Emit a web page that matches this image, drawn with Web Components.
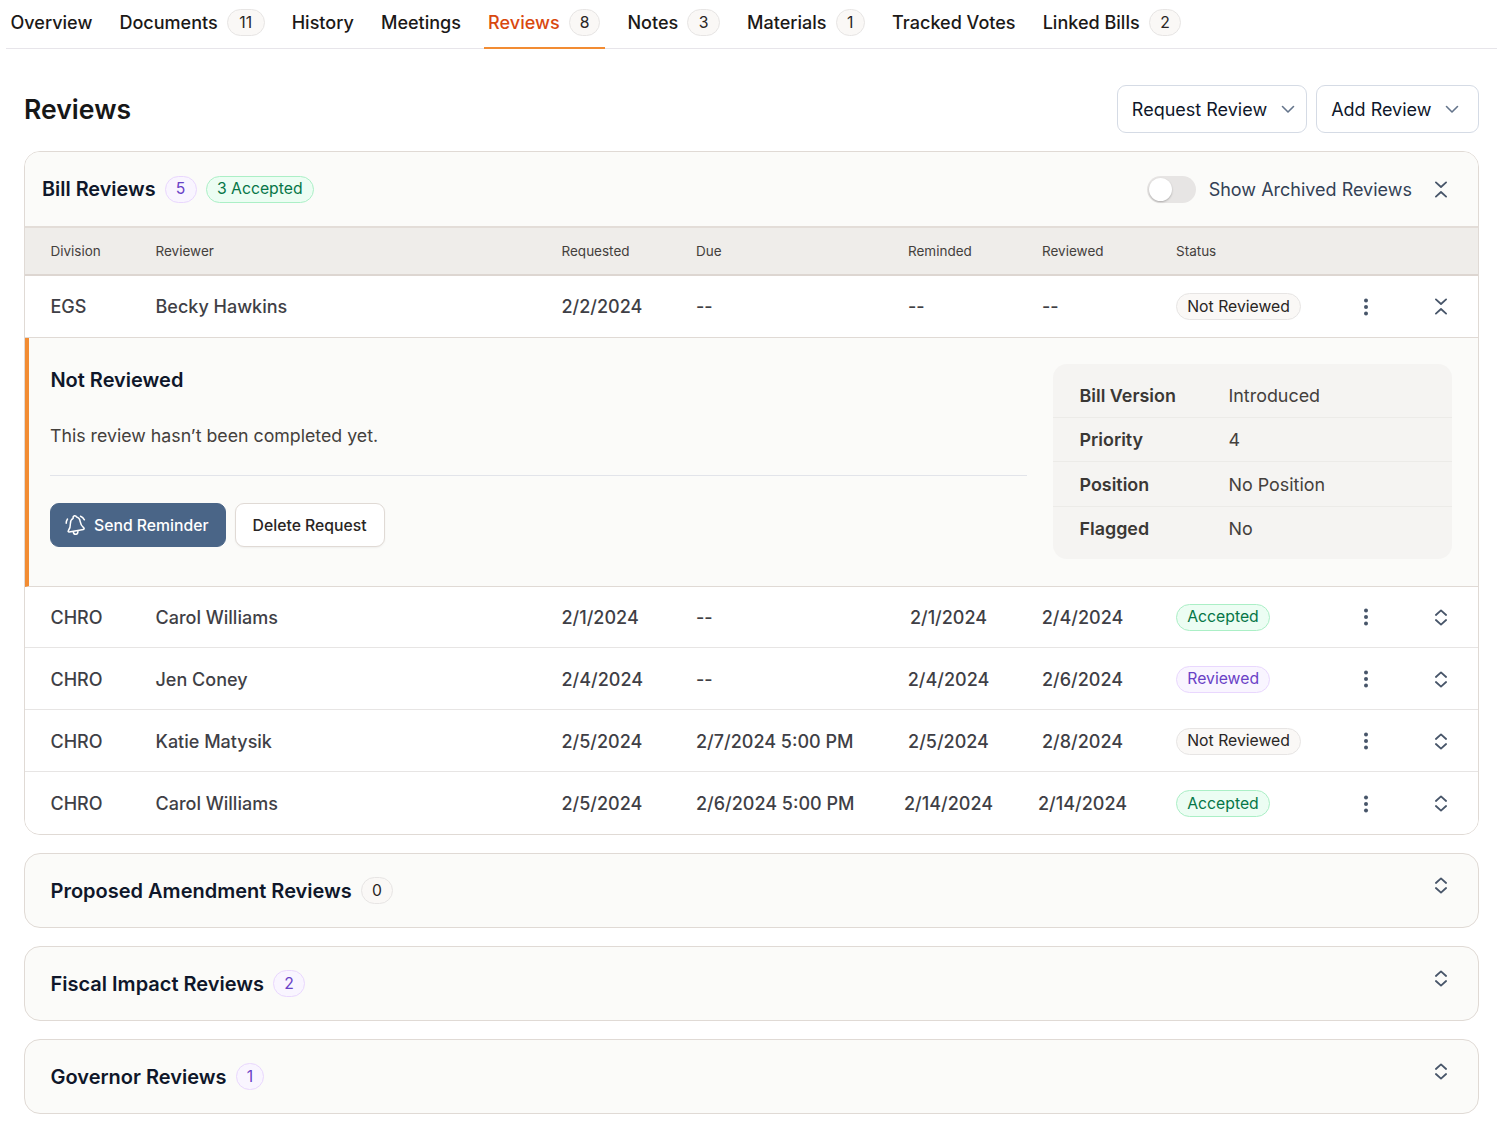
<!DOCTYPE html>
<html lang="en">
<head>
<meta charset="utf-8">
<title>Reviews</title>
<style>
  html, body { margin: 0; background: #fff; }
  body { font-family: Inter, "Liberation Sans", sans-serif; color: #1c1917; }
</style>
</head>
<body>
<app-tabs>
  <tab-item>Overview</tab-item>
  <tab-item count="11" wide>Documents</tab-item>
  <tab-item>History</tab-item>
  <tab-item>Meetings</tab-item>
  <tab-item count="8" active narrow>Reviews</tab-item>
  <tab-item count="3">Notes</tab-item>
  <tab-item count="1">Materials</tab-item>
  <tab-item>Tracked Votes</tab-item>
  <tab-item count="2">Linked Bills</tab-item>
</app-tabs>

<reviews-page>
  <page-title>
    Reviews
    <menu-button slot="actions">Request Review</menu-button>
    <menu-button slot="actions" wide>Add Review</menu-button>
  </page-title>

  <review-card>
    <card-head>
      Bill Reviews
      <count-pill slot="badges" tone="purple">5</count-pill>
      <count-pill slot="badges" tone="green">3 Accepted</count-pill>
      <archive-toggle slot="tools">Show Archived Reviews</archive-toggle>
      <chevron-icon slot="tools" mode="collapse"></chevron-icon>
    </card-head>
    <review-head></review-head>
    <review-row division="EGS" reviewer="Becky Hawkins" requested="2/2/2024" due="--" reminded="--" reviewed="--" status="Not Reviewed" tone="gray" open></review-row>
    <review-detail>
      <detail-fact label="Bill Version">Introduced</detail-fact>
      <detail-fact label="Priority">4</detail-fact>
      <detail-fact label="Position">No Position</detail-fact>
      <detail-fact label="Flagged" last>No</detail-fact>
    </review-detail>
    <review-row division="CHRO" reviewer="Carol Williams" requested="2/1/2024" due="--" reminded="2/1/2024" reviewed="2/4/2024" status="Accepted" tone="green" short></review-row>
    <review-row division="CHRO" reviewer="Jen Coney" requested="2/4/2024" due="--" reminded="2/4/2024" reviewed="2/6/2024" status="Reviewed" tone="purple"></review-row>
    <review-row division="CHRO" reviewer="Katie Matysik" requested="2/5/2024" due="2/7/2024 5:00 PM" reminded="2/5/2024" reviewed="2/8/2024" status="Not Reviewed" tone="gray"></review-row>
    <review-row division="CHRO" reviewer="Carol Williams" requested="2/5/2024" due="2/6/2024 5:00 PM" reminded="2/14/2024" reviewed="2/14/2024" status="Accepted" tone="green" last></review-row>
  </review-card>

  <collapsed-card count="0" tone="gray">Proposed Amendment Reviews</collapsed-card>
  <collapsed-card count="2" tone="purple">Fiscal Impact Reviews</collapsed-card>
  <collapsed-card count="1" tone="purple">Governor Reviews</collapsed-card>
</reviews-page>

<script>
// Small helper: every element gets an open shadow root from a string
function shadow(el, html) {
  el.attachShadow({ mode: 'open' }).innerHTML = html;
}

class AppTabs extends HTMLElement {
  constructor() {
    super();
    shadow(this, `
      <style>
        :host { display: flex; gap: 18.1px; height: 49px; margin: 0 3px 0 6px; border-bottom: 1px solid #e7e5ea; box-sizing: border-box; }
      </style>
      <slot></slot>`);
  }
}

class CountPill extends HTMLElement {
  constructor() {
    super();
    shadow(this, `
      <style>
        :host { display: inline-flex; align-items: center; justify-content: center; height: 27px; box-sizing: border-box; padding: 0 10.25px; border-radius: 14px; border: 1px solid #e7e5e4; background: #faf8f6; color: #292524; font-size: 15.75px; font-weight: 400; line-height: 1; white-space: nowrap; }
        :host([tone="purple"]) { background: #f9f5ff; border-color: #e9d7fe; color: #6941c6; }
        :host([tone="green"]) { background: #ecfdf3; border-color: #abefc6; color: #067647; }
      </style>
      <slot></slot>`);
  }
}

class TabItem extends HTMLElement {
  constructor() {
    super();
    const count = this.getAttribute('count');
    const pad = this.hasAttribute('wide') ? 11.5 : this.hasAttribute('narrow') ? 10 : 10.5;
    shadow(this, `
      <style>
        :host { display: flex; align-items: center; gap: 9px; height: 49px; box-sizing: border-box; padding: 0 4.5px 2px; font-size: 18.05px; font-weight: 500; color: #1c1917; border-bottom: 2px solid transparent; }
        :host([active]) { color: #d9480f; border-bottom-color: #f28c33; }
        count-pill { padding: 0 ${pad}px; }
      </style>
      <slot></slot>
      ${count ? `<count-pill>${count}</count-pill>` : ''}`);
  }
}

class ReviewsPage extends HTMLElement {
  constructor() {
    super();
    shadow(this, `
      <style>
        :host { display: flex; flex-direction: column; gap: 18px; padding: 35px 21px 33px 24px; }
      </style>
      <slot></slot>`);
  }
}

class PageTitle extends HTMLElement {
  constructor() {
    super();
    shadow(this, `
      <style>
        :host { display: flex; align-items: center; justify-content: space-between; height: 49px; }
        h1 { margin: 0; font-size: 26.6px; font-weight: 600; color: #171717; }
        .actions { display: flex; gap: 9px; padding-top: 1px; }
      </style>
      <h1><slot></slot></h1>
      <div class="actions"><slot name="actions"></slot></div>`);
  }
}

class MenuButton extends HTMLElement {
  constructor() {
    super();
    shadow(this, `
      <style>
        :host { display: flex; align-items: center; gap: 13px; height: 48px; box-sizing: border-box; padding: 0 10px 0 14px; background: #fff; border: 1px solid #d5dbe5; border-radius: 9px; color: #0f172a; font-size: 18px; font-weight: 400; }
        :host([wide]) { gap: 12px; padding-right: 18.5px; }
        svg { width: 16px; height: 16px; fill: none; stroke: #64748b; stroke-width: 1.6; stroke-linecap: round; stroke-linejoin: round; }
      </style>
      <slot></slot>
      <svg viewBox="0 0 16 16"><path d="M2.5 5.5 8 11l5.5-5.5"/></svg>`);
  }
}

class ChevronIcon extends HTMLElement {
  constructor() {
    super();
    // collapse = chevrons pointing at each other, expand = pointing away
    const d = this.getAttribute('mode') === 'collapse'
      ? 'M1.9 2.4 7 7 12.1 2.4M1.9 16.6 7 12 12.1 16.6'
      : 'M1.9 7 7 2.4 12.1 7M1.9 12 7 16.600 12.1 12';
    shadow(this, `
      <style>
        :host { display: block; width: 14px; height: 19px; line-height: 0; }
        svg { width: 14px; height: 19px; fill: none; stroke: #475569; stroke-width: 1.8; stroke-linecap: round; stroke-linejoin: round; }
      </style>
      <svg viewBox="0 0 14 19"><path d="${d}"/></svg>`);
  }
}

class KebabIcon extends HTMLElement {
  constructor() {
    super();
    shadow(this, `
      <style>
        :host { display: block; width: 6px; height: 18px; line-height: 0; }
        svg { width: 6px; height: 18px; fill: #475569; }
      </style>
      <svg viewBox="0 0 6 18"><circle cx="3" cy="2.5" r="2"/><circle cx="3" cy="9" r="2"/><circle cx="3" cy="15.5" r="2"/></svg>`);
  }
}

class ReviewCard extends HTMLElement {
  constructor() {
    super();
    shadow(this, `
      <style>
        :host { display: block; border: 1px solid #e0dad5; border-radius: 16px; background: #fff; overflow: hidden; }
      </style>
      <slot></slot>`);
  }
}

class CardHead extends HTMLElement {
  constructor() {
    super();
    shadow(this, `
      <style>
        :host { display: flex; align-items: center; gap: 9px; height: 74px; box-sizing: border-box; padding: 0 30px 0 17px; background: #fbfbf9; }
        .title { font-size: 19.85px; font-weight: 600; color: #0f172a; }
        .tools { display: flex; align-items: center; gap: 22px; margin-left: auto; }
      </style>
      <span class="title"><slot></slot></span>
      <slot name="badges"></slot>
      <div class="tools"><slot name="tools"></slot></div>`);
  }
}

class ArchiveToggle extends HTMLElement {
  constructor() {
    super();
    shadow(this, `
      <style>
        :host { display: flex; align-items: center; gap: 13px; font-size: 18px; color: #334155; }
        .track { width: 49px; height: 27px; border-radius: 14px; background: #e7e5e4; padding: 2px; box-sizing: border-box; }
        .knob { width: 23px; height: 23px; border-radius: 50%; background: #fff; box-shadow: 0 1px 2px rgba(0,0,0,.25); }
      </style>
      <div class="track"><div class="knob"></div></div>
      <slot></slot>`);
  }
}

// Shared column template for the head and the rows
const GRID_STYLE = `grid-template-columns: 105px 406px 134.5px 212px 134px 134px 171px 38px 75px; padding-left: 25.5px;`;

class ReviewHead extends HTMLElement {
  constructor() {
    super();
    const cols = ['Division', 'Reviewer', 'Requested', 'Due', 'Reminded', 'Reviewed', 'Status'];
    shadow(this, `
      <style>
        :host { display: grid; ${GRID_STYLE} align-items: center; height: 50px; box-sizing: border-box; background: #efedea; border-top: 2px solid #e3ddd8; border-bottom: 2px solid #ddd6d1; font-size: 13.5px; color: #44403c; }
      </style>
      ${cols.map(c => `<span>${c}</span>`).join('')}`);
  }
}

class ReviewRow extends HTMLElement {
  constructor() {
    super();
    const a = n => this.getAttribute(n);
    const mode = this.hasAttribute('open') ? 'collapse' : 'expand';
    shadow(this, `
      <style>
        :host { display: grid; ${GRID_STYLE} align-items: center; height: 62px; padding-top: 1px; box-sizing: border-box; border-bottom: 1px solid #e7e5e4; background: #fff; font-size: 18px; font-weight: 500; color: #3f3f46; }
        :host([short]) { height: 61px; padding-top: 0; }
        :host([last]) { border-bottom: 0; }
        :host([open]) { padding-top: 0; border-bottom-color: #e0dad5; }
        .date { display: flex; justify-content: center; width: 81px; white-space: nowrap; }
        .center { display: flex; justify-content: center; }
        .end { display: flex; justify-content: flex-end; padding-right: 12px; }
        count-pill { justify-self: start; }
      </style>
      <span>${a('division')}</span>
      <span>${a('reviewer')}</span>
      <span>${a('requested')}</span>
      <span>${a('due')}</span>
      <span class="${a('reminded') === '--' ? '' : 'date'}">${a('reminded')}</span>
      <span class="${a('reviewed') === '--' ? '' : 'date'}">${a('reviewed')}</span>
      <count-pill tone="${a('tone')}">${a('status')}</count-pill>
      <div class="center"><kebab-icon></kebab-icon></div>
      <div class="end"><chevron-icon mode="${mode}"></chevron-icon></div>`);
  }
}

class ReviewDetail extends HTMLElement {
  constructor() {
    super();
    shadow(this, `
      <style>
        :host { display: flex; gap: 26px; height: 249px; box-sizing: border-box; padding: 26px 26px 26px 21px; background: #fbfbf9; border-left: 4.5px solid #f28c33; border-bottom: 1px solid #e0dad5; }
        .main { flex: 1; }
        h3 { margin: 0 0 0 .4px; font-size: 20px; line-height: 32px; font-weight: 600; color: #0f172a; }
        p { margin: 26px 0 0; font-size: 17.75px; line-height: 27px; color: #44403c; padding-bottom: 26px; border-bottom: 1px solid #e2e4ea; }
        .buttons { display: flex; gap: 9px; margin-top: 27px; }
        button { height: 44px; box-sizing: border-box; border-radius: 9px; font: 500 15.75px Inter, "Liberation Sans", sans-serif; display: flex; align-items: center; }
        .primary { gap: 7px; padding: 0 16px 0 14px; background: #4a6587; border: 1px solid #4a6587; color: #fff; }
        .secondary { padding: 0 17px; background: #fff; border: 1px solid #e0dad5; color: #292524; box-shadow: 0 1px 2px rgba(0,0,0,.05); }
        svg { width: 22px; height: 22px; fill: none; stroke: #fff; stroke-width: 1.5; stroke-linecap: round; stroke-linejoin: round; }
        .facts { width: 399px; padding: 9px 0 8px; box-sizing: border-box; border-radius: 14px; background: #f5f4f2; overflow: hidden; align-self: flex-start; }
      </style>
      <div class="main">
        <h3>Not Reviewed</h3>
        <p>This review hasn’t been completed yet.</p>
        <div class="buttons">
          <button class="primary">
            <svg viewBox="0 0 22 22">
              <path d="M9.5 1.8c1-.1 1.8.4 2.1 1.3 2.2.5 3.3 2.3 3.6 4.5.3 2.6 1.4 4.4 3.6 6.3.6.5.4 1.4-.4 1.5L4.2 18c-.8.2-1.4-.7-.9-1.3 1.7-2.4 2.2-4.4 2.1-7-.1-2.3.8-4.2 2.7-5.3-.1-1.2.4-2.4 1.4-2.6Z"/>
              <path d="M8.3 18c.3 1.7 1.3 2.5 2.7 2.3 1.2-.2 1.9-1.2 1.9-2.9"/>
              <path d="M2.5 5C1.6 6.3 1.2 7.7 1.2 9.3M15.5 2.3c1.7.6 3 1.8 3.9 3.5"/>
            </svg>
            Send Reminder
          </button>
          <button class="secondary">Delete Request</button>
        </div>
      </div>
      <div class="facts"><slot></slot></div>`);
  }
}

class DetailFact extends HTMLElement {
  constructor() {
    super();
    shadow(this, `
      <style>
        :host { display: grid; grid-template-columns: 149px 1fr; align-items: center; height: 44.5px; box-sizing: border-box; padding: 1px 0 0 26.5px; border-bottom: 1px solid #ecebe8; font-size: 17.9px; color: #44403c; }
        :host([last]) { border-bottom: 0; padding-top: 0; }
        b { font-weight: 600; color: #3a3835; }
      </style>
      <b>${this.getAttribute('label')}</b>
      <span><slot></slot></span>`);
  }
}

class CollapsedCard extends HTMLElement {
  constructor() {
    super();
    shadow(this, `
      <style>
        :host { display: flex; align-items: center; gap: 9px; height: 75px; box-sizing: border-box; padding: 0 30px 0 25.5px; border: 1px solid #e0dad5; border-radius: 16px; background: #fbfbf9; }
        .title { font-size: 20px; font-weight: 600; color: #0f172a; }
        chevron-icon { margin-left: auto; margin-bottom: 10px; }
      </style>
      <span class="title"><slot></slot></span>
      <count-pill tone="${this.getAttribute('tone')}">${this.getAttribute('count')}</count-pill>
      <chevron-icon mode="expand"></chevron-icon>`);
  }
}

customElements.define('app-tabs', AppTabs);
customElements.define('count-pill', CountPill);
customElements.define('tab-item', TabItem);
customElements.define('reviews-page', ReviewsPage);
customElements.define('page-title', PageTitle);
customElements.define('menu-button', MenuButton);
customElements.define('chevron-icon', ChevronIcon);
customElements.define('kebab-icon', KebabIcon);
customElements.define('review-card', ReviewCard);
customElements.define('card-head', CardHead);
customElements.define('archive-toggle', ArchiveToggle);
customElements.define('review-head', ReviewHead);
customElements.define('review-row', ReviewRow);
customElements.define('review-detail', ReviewDetail);
customElements.define('detail-fact', DetailFact);
customElements.define('collapsed-card', CollapsedCard);
</script>
</body>
</html>
